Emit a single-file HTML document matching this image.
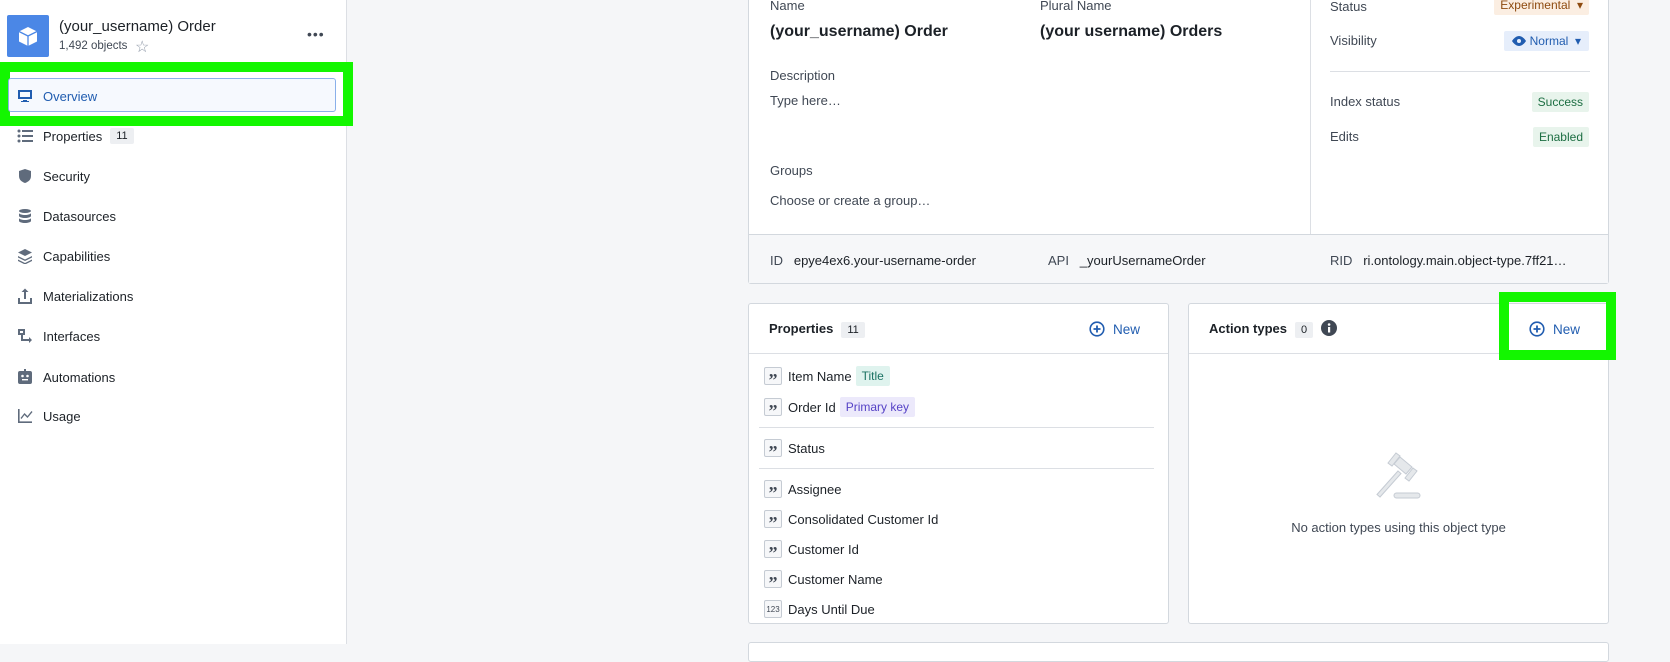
<!DOCTYPE html>
<html><head><meta charset="utf-8"><style>
*{box-sizing:border-box;margin:0;padding:0}
body{width:1670px;height:644px;overflow:hidden;background:#f5f6f8;font-family:"Liberation Sans",sans-serif;font-size:13px;color:#1c2127;position:relative}
.a{position:absolute;white-space:nowrap}
.side{position:absolute;left:0;top:0;width:347px;height:644px;background:#fff;border-right:1px solid #dcdfe4}
.nav{position:absolute;left:17px;height:20px;display:flex;align-items:center;color:#1c2127}
.nav svg{width:16px;height:16px;margin-right:10px;fill:#5f6b7c}
.tag{display:inline-block;background:#edeff2;color:#1c2127;font-size:11px;padding:2px 6px;border-radius:2px;margin-left:8px}
.card{position:absolute;background:#fff;border:1px solid #d3d8de;border-radius:3px}
.lbl{color:#404854}
.badge{position:absolute;font-size:12px;padding:0 6px;height:20px;line-height:20px;border-radius:2px}
.row{position:absolute;left:15px;display:flex;align-items:center;height:20px}
.qi{width:18px;height:18px;border:1px solid #c5cbd3;border-radius:2px;background:#f6f7f9;font-size:18px;font-weight:bold;color:#404854;text-align:center;line-height:24px;margin-right:6px;font-family:"Liberation Serif",serif;overflow:hidden}
.sep{position:absolute;left:10px;right:14px;height:1px;background:#dcdfe4}
</style></head><body>
<div class="side">
 <div class="a" style="left:7px;top:15px;width:42px;height:42px;background:#4b87e6;border-radius:2px">
  <svg width="42" height="42" viewBox="0 0 42 42"><path d="M21 12l9 4.5v10L21 31l-9-4.5v-10z" fill="#fff"/><path d="M12 16.5l9 4.5 9-4.5M21 21v10" stroke="#4b87e6" stroke-width="1.3" fill="none"/></svg>
 </div>
 <div class="a" style="left:59px;top:18px;font-size:15px">(your_username) Order</div>
 <div class="a" style="left:59px;top:40px;font-size:11.5px;color:#404854">1,492 objects</div>
 <div class="a" style="left:135px;top:37px;font-size:16px;color:#8f99a8">☆</div>
 <div class="a" style="left:307px;top:26px;font-size:14px;color:#404854;letter-spacing:1px">•••</div>
 <div class="a" style="left:0;top:62px;width:353px;height:64px;border:10px solid #13f600"></div>
 <div class="a" style="left:8px;top:78px;width:328px;height:34px;border:1px solid #8ab0ea;border-radius:3px;background:#f6f9fe"></div>
 <div class="nav" style="top:86px;color:#215db0"><svg viewBox="0 0 16 16" style="fill:#215db0"><path d="M1 2h14v9H1z M3 4v5h10V4z M6 12h4v1h2v1H4v-1h2z"/></svg>Overview</div>
 <div class="nav" style="top:126px"><svg viewBox="0 0 16 16"><circle cx="2" cy="3" r="1.5"/><circle cx="2" cy="8" r="1.5"/><circle cx="2" cy="13" r="1.5"/><rect x="5" y="2" width="11" height="2"/><rect x="5" y="7" width="11" height="2"/><rect x="5" y="12" width="11" height="2"/></svg>Properties<span class="tag">11</span></div>
 <div class="nav" style="top:166px"><svg viewBox="0 0 16 16"><path d="M8 1l6 2v5c0 4-3 6-6 7-3-1-6-3-6-7V3z"/></svg>Security</div>
 <div class="nav" style="top:206px"><svg viewBox="0 0 16 16"><ellipse cx="8" cy="3" rx="6" ry="2"/><path d="M2 5c0 1 3 2 6 2s6-1 6-2v3c0 1-3 2-6 2S2 9 2 8zM2 10c0 1 3 2 6 2s6-1 6-2v3c0 1-3 2-6 2s-6-1-6-2z"/></svg>Datasources</div>
 <div class="nav" style="top:246px"><svg viewBox="0 0 16 16"><path d="M8 1l7 3.5-7 3.5-7-3.5zM1 8l7 3.5L15 8v1.5L8 13 1 9.5zM1 11.5L8 15l7-3.5V13L8 16.5 1 13z"/></svg>Capabilities</div>
 <div class="nav" style="top:286px"><svg viewBox="0 0 16 16"><path d="M7 4H4.5L8 0.5 11.5 4H9v7H7zM1 10h2v4h10v-4h2v6H1z"/></svg>Materializations</div>
 <div class="nav" style="top:326px"><svg viewBox="0 0 16 16"><path d="M1 1h7v6H6v4h6V9l3 3-3 3v-2H4V7H1zM3 3v2h3V3z"/></svg>Interfaces</div>
 <div class="nav" style="top:367px"><svg viewBox="0 0 16 16"><path d="M7 0h2v2h4a2 2 0 012 2v9a2 2 0 01-2 2H3a2 2 0 01-2-2V4a2 2 0 012-2h4z" /><circle cx="5.5" cy="7" r="1.3" fill="#fff"/><circle cx="10.5" cy="7" r="1.3" fill="#fff"/><rect x="5" y="10" width="6" height="1.4" fill="#fff"/></svg>Automations</div>
 <div class="nav" style="top:406px"><svg viewBox="0 0 16 16"><path d="M1 1h1.6v12.4H15V15H1zM3.5 10l4-5 3 3 4-5 1 1-5 6-3-3-3 4z"/></svg>Usage</div>
</div>

<div class="card" style="left:748px;top:-10px;width:861px;height:294px">
 <div class="a" style="left:561px;top:0;width:1px;height:243px;background:#dcdfe4"></div>
 <div class="a" style="left:0;top:243px;width:859px;height:49px;background:#f6f7f9;border-top:1px solid #d3d8de"></div>
 <div class="a lbl" style="left:21px;top:7px">Name</div>
 <div class="a" style="left:21px;top:32px;font-size:16px;font-weight:bold">(your_username) Order</div>
 <div class="a lbl" style="left:291px;top:7px">Plural Name</div>
 <div class="a" style="left:291px;top:32px;font-size:16px;font-weight:bold">(your username) Orders</div>
 <div class="a lbl" style="left:21px;top:77px">Description</div>
 <div class="a lbl" style="left:21px;top:102px">Type here…</div>
 <div class="a lbl" style="left:21px;top:172px">Groups</div>
 <div class="a lbl" style="left:21px;top:202px">Choose or create a group…</div>
 <div class="a lbl" style="left:581px;top:8px">Status</div>
 <div class="badge" style="right:19px;top:4px;background:#fbeee2;color:#8e4b10">Experimental&nbsp; ▾</div>
 <div class="a lbl" style="left:581px;top:42px">Visibility</div>
 <div class="badge" style="right:19px;top:40px;background:#e6eefb;color:#215db0;padding:0 8px">
  <svg width="14" height="10" viewBox="0 0 14 10" style="vertical-align:-1px"><path d="M7 0C3 0 0 5 0 5s3 5 7 5 7-5 7-5-3-5-7-5z" fill="#215db0"/><circle cx="7" cy="5" r="2" fill="#e6eefb"/></svg> Normal&nbsp; ▾</div>
 <div class="a" style="left:581px;top:80px;width:260px;height:1px;background:#dcdfe4"></div>
 <div class="a lbl" style="left:581px;top:103px">Index status</div>
 <div class="badge" style="right:19px;top:101px;background:#e8f4ec;color:#1c6e42">Success</div>
 <div class="a lbl" style="left:581px;top:138px">Edits</div>
 <div class="badge" style="right:19px;top:136px;background:#e8f4ec;color:#1c6e42">Enabled</div>
 <div class="a" style="left:21px;top:262px"><span class="lbl">ID</span>&nbsp;&nbsp; epye4ex6.your-username-order</div>
 <div class="a" style="left:299px;top:262px"><span class="lbl">API</span>&nbsp;&nbsp; _yourUsernameOrder</div>
 <div class="a" style="left:581px;top:262px"><span class="lbl">RID</span>&nbsp;&nbsp; ri.ontology.main.object-type.7ff21…</div>
</div>

<div class="card" style="left:748px;top:303px;width:421px;height:321px">
 <div class="a" style="left:0;top:49px;width:419px;height:1px;background:#dcdfe4"></div>
 <div class="a" style="left:20px;top:17px;font-weight:bold">Properties<span class="tag" style="font-weight:normal">11</span></div>
 <div class="a" style="left:340px;top:17px;color:#215db0;font-size:13.5px"><svg width="16" height="16" viewBox="0 0 16 16" style="vertical-align:-3px;margin-right:8px"><circle cx="8" cy="8" r="6.8" fill="none" stroke="#215db0" stroke-width="1.6"/><path d="M8 4.5v7M4.5 8h7" stroke="#215db0" stroke-width="1.8"/></svg>New</div>
 <div class="row" style="top:62px"><div class="qi">”</div>Item Name<span class="badge" style="position:static;margin-left:4px;background:#dff3ee;color:#1a7262">Title</span></div>
 <div class="row" style="top:93px"><div class="qi">”</div>Order Id<span class="badge" style="position:static;margin-left:4px;background:#ece9fb;color:#5642c6">Primary key</span></div>
 <div class="sep" style="top:123px"></div>
 <div class="row" style="top:134px"><div class="qi">”</div>Status</div>
 <div class="sep" style="top:164px"></div>
 <div class="row" style="top:175px"><div class="qi">”</div>Assignee</div>
 <div class="row" style="top:205px"><div class="qi">”</div>Consolidated Customer Id</div>
 <div class="row" style="top:235px"><div class="qi">”</div>Customer Id</div>
 <div class="row" style="top:265px"><div class="qi">”</div>Customer Name</div>
 <div class="row" style="top:295px"><div class="qi" style="font-size:8px;font-weight:normal;line-height:17px;font-family:'Liberation Sans',sans-serif">123</div>Days Until Due</div>
</div>

<div class="card" style="left:1188px;top:303px;width:421px;height:321px">
 <div class="a" style="left:0;top:49px;width:419px;height:1px;background:#dcdfe4"></div>
 <div class="a" style="left:20px;top:17px;font-weight:bold">Action types<span class="tag" style="font-weight:normal">0</span></div>
 <svg class="a" style="left:132px;top:16px" width="16" height="16" viewBox="0 0 16 16"><circle cx="8" cy="8" r="8" fill="#404854"/><rect x="7" y="7" width="2.2" height="5.5" fill="#fff"/><circle cx="8.1" cy="4.5" r="1.3" fill="#fff"/></svg>
 <div class="a" style="left:340px;top:17px;color:#215db0;font-size:13.5px"><svg width="16" height="16" viewBox="0 0 16 16" style="vertical-align:-3px;margin-right:8px"><circle cx="8" cy="8" r="6.8" fill="none" stroke="#215db0" stroke-width="1.6"/><path d="M8 4.5v7M4.5 8h7" stroke="#215db0" stroke-width="1.8"/></svg>New</div>
 <svg class="a" style="left:185px;top:145px" width="52" height="52" viewBox="0 0 52 52" fill="#e5e8eb" stroke="#c5cbd3" stroke-width="1"><path d="M22 4l4 3-8 10-4-3z"/><path d="M26 8l12 10-6 7-12-10z"/><path d="M39 19l4 3-8 10-4-3z"/><path d="M24 22l3 2.5L6 48l-3-2.5z"/><rect x="20" y="44" width="26" height="5" rx="2.5"/></svg>
 <div class="a" style="left:0;width:419px;text-align:center;top:216px;color:#404854">No action types using this object type</div>
</div>
<div class="a" style="left:1499px;top:292px;width:117px;height:68px;border:10px solid #13f600"></div>
<div class="card" style="left:748px;top:642px;width:861px;height:20px"></div>
</body></html>
